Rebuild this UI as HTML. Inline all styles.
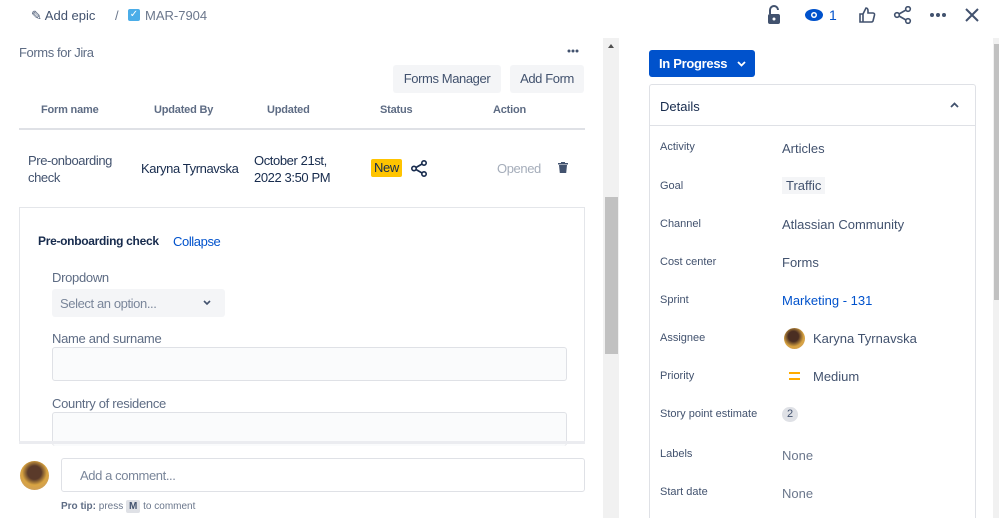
<!DOCTYPE html>
<html><head><meta charset="utf-8"><style>
*{box-sizing:border-box;margin:0;padding:0}
html{width:999px;height:518px;overflow:hidden}
body{width:999px;height:518px;overflow:hidden;background:#fff;font-family:"Liberation Sans",sans-serif;color:#172b4d;position:relative}
.a{position:absolute;white-space:nowrap}
.lbl{font-size:11px;color:#42526e}
.val{font-size:13px;color:#42526e}
.th{font-size:11px;color:#5e6c84;font-weight:bold;letter-spacing:-0.2px}
.fl{font-size:13px;color:#5e6c84;letter-spacing:-0.3px}
.c{letter-spacing:-0.4px}
.inp{position:absolute;background:#fafbfc;border:2px solid #dfe1e6;border-radius:3px}
</style></head><body>
<div class="a" style="left:31px;top:8px;font-size:13px;color:#42526e">✎ Add epic</div>
<div class="a" style="left:115px;top:8px;font-size:13px;color:#6b778c">/</div>
<div class="a" style="left:128px;top:9px;width:12px;height:12px;background:#4bade8;border-radius:2px;color:#fff;font-size:10px;line-height:12px;text-align:center">✓</div>
<div class="a" style="left:145px;top:8px;font-size:13px;color:#6b778c">MAR-7904</div>
<svg class="a" style="left:766px;top:5px" width="16" height="20" viewBox="0 0 16 20"><path d="M4 9V5a4 4 0 0 1 8 0" stroke="#42526e" stroke-width="2" fill="none"/><rect x="2" y="9" width="12" height="10" rx="2" fill="#42526e"/><circle cx="8" cy="14" r="1.5" fill="#fff"/></svg>
<svg class="a" style="left:804px;top:8px" width="20" height="14" viewBox="0 0 20 14"><ellipse cx="10" cy="7" rx="9" ry="6" fill="#0052cc"/><circle cx="10" cy="7" r="3" fill="#fff"/><circle cx="10" cy="7" r="1.5" fill="#0052cc"/></svg>
<div class="a" style="left:829px;top:7px;font-size:14px;color:#0052cc">1</div>
<svg class="a" style="left:858px;top:6px" width="18" height="18" viewBox="0 0 18 18" fill="none" stroke="#42526e" stroke-width="1.6"><path d="M2 8h3v8H2zM5 8l3-6c2 0 2 2 2 3v2h5c1 0 2 1 1.5 2l-1.5 6c-.3 1-1 1-2 1H5"/></svg>
<svg class="a" style="left:893px;top:6px" width="20" height="18" viewBox="0 0 20 18" fill="none" stroke="#42526e" stroke-width="1.6"><circle cx="15" cy="3" r="2.3"/><circle cx="4" cy="9" r="2.3"/><circle cx="15" cy="15" r="2.3"/><path d="M6 8l7-4M6 10l7 4"/></svg>
<svg class="a" style="left:929px;top:12px" width="18" height="6" viewBox="0 0 18 6" fill="#42526e"><circle cx="3" cy="3" r="2"/><circle cx="9" cy="3" r="2"/><circle cx="15" cy="3" r="2"/></svg>
<svg class="a" style="left:964px;top:7px" width="16" height="16" viewBox="0 0 16 16" stroke="#42526e" stroke-width="2"><path d="M2 2l12 12M14 2L2 14"/></svg>

<div class="a c" style="left:19px;top:45px;font-size:13px;color:#5e6c84">Forms for Jira</div>
<svg class="a" style="left:567px;top:49px" width="12" height="4" viewBox="0 0 12 4" fill="#42526e"><circle cx="2" cy="2" r="1.5"/><circle cx="6" cy="2" r="1.5"/><circle cx="10" cy="2" r="1.5"/></svg>
<div class="a c" style="left:393px;top:65px;width:108px;height:28px;background:#f4f5f7;border-radius:3px;font-size:13px;color:#42526e;text-align:center;line-height:28px">Forms Manager</div>
<div class="a c" style="left:510px;top:65px;width:74px;height:28px;background:#f4f5f7;border-radius:3px;font-size:13px;color:#42526e;text-align:center;line-height:28px">Add Form</div>
<div class="a th" style="left:41px;top:104px">Form name</div>
<div class="a th" style="left:154px;top:104px">Updated By</div>
<div class="a th" style="left:267px;top:104px">Updated</div>
<div class="a th" style="left:380px;top:104px">Status</div>
<div class="a th" style="left:493px;top:104px">Action</div>
<div class="a" style="left:19px;top:128px;width:566px;height:2px;background:#dfe1e6"></div>
<div class="a c" style="left:28px;top:152px;font-size:13px;color:#42526e;line-height:17px">Pre-onboarding<br>check</div>
<div class="a c" style="left:141px;top:161px;font-size:13px;color:#172b4d">Karyna Tyrnavska</div>
<div class="a c" style="left:254px;top:152px;font-size:13px;color:#172b4d;line-height:17px">October 21st,<br>2022 3:50 PM</div>
<div class="a c" style="left:371px;top:159px;height:18px;padding:0 3px;background:#ffc400;border-radius:2px;font-size:13px;color:#172b4d;line-height:18px">New</div>
<svg class="a" style="left:410px;top:160px" width="18" height="17" viewBox="0 0 18 17" fill="none" stroke="#172b4d" stroke-width="1.6"><circle cx="14" cy="3" r="2.2"/><circle cx="4" cy="8.5" r="2.2"/><circle cx="14" cy="14" r="2.2"/><path d="M6 7.5l6-3.5M6 9.5l6 3.5"/></svg>
<div class="a c" style="left:497px;top:161px;font-size:13px;color:#a5adba">Opened</div>
<svg class="a" style="left:558px;top:162px" width="10" height="11" viewBox="0 0 10 11"><rect x="0" y="1" width="10" height="1.5" fill="#42526e"/><rect x="3" y="0" width="4" height="1.5" fill="#42526e"/><path d="M1 3h8l-.8 8H1.8z" fill="#42526e"/></svg>

<div class="a" style="left:19px;top:207px;width:566px;height:237px;border:1px solid #e4e6ea;border-bottom:none"></div>
<div class="a" style="left:38px;top:234px;font-size:12px;font-weight:bold;color:#172b4d;letter-spacing:-0.3px">Pre-onboarding check</div>
<div class="a c" style="left:173px;top:234px;font-size:13px;color:#0052cc">Collapse</div>
<div class="a fl" style="left:52px;top:270px">Dropdown</div>
<div class="a" style="left:52px;top:289px;width:173px;height:28px;background:#f4f5f7;border-radius:3px"></div>
<div class="a c" style="left:60px;top:296px;font-size:13px;color:#7a869a">Select an option...</div>
<svg class="a" style="left:203px;top:300px" width="8" height="6" viewBox="0 0 8 6"><path d="M1 1l3 3 3-3" stroke="#42526e" stroke-width="1.6" fill="none"/></svg>
<div class="a fl" style="left:52px;top:331px">Name and surname</div>
<div class="inp" style="left:52px;top:347px;width:515px;height:34px;border-width:1px"></div>
<div class="a fl" style="left:52px;top:396px">Country of residence</div>
<div class="inp" style="left:52px;top:412px;width:515px;height:34px;border-width:1px;border-bottom:none"></div>
<div class="a" style="left:19px;top:441px;width:566px;height:3px;background:#ebecf0"></div>

<div class="a" style="left:20px;top:461px;width:29px;height:29px;border-radius:50%;background:radial-gradient(circle at 50% 40%,#5a3a2a 30%,#d9a441 55%,#c49a6c 100%)"></div>
<div class="a" style="left:61px;top:458px;width:524px;height:34px;border:1px solid #dfe1e6;border-radius:3px"></div>
<div class="a c" style="left:80px;top:468px;font-size:13px;color:#7a869a">Add a comment...</div>
<div class="a" style="left:61px;top:501px;font-size:10px;color:#6b778c"><b style="color:#5e6c84">Pro tip:</b> press <span style="background:#dfe1e6;padding:1px 3px;border-radius:2px;font-weight:bold;color:#42526e">M</span> to comment</div>

<div class="a" style="left:603px;top:38px;width:16px;height:480px;background:#f1f1f1"></div>
<div class="a" style="left:605px;top:197px;width:13px;height:157px;background:#c1c1c1"></div>
<div class="a" style="left:608px;top:44px;width:0;height:0;border:3px solid transparent;border-bottom:4px solid #505050;border-top:none"></div>

<div class="a" style="left:649px;top:50px;width:106px;height:27px;background:#0052cc;border-radius:3px;color:#fff;font-size:13px;font-weight:bold;line-height:27px;padding-left:10px;letter-spacing:-0.3px">In Progress</div>
<svg class="a" style="left:737px;top:61px" width="9" height="6" viewBox="0 0 9 6"><path d="M1 1l3.5 3.5L8 1" stroke="#fff" stroke-width="1.8" fill="none"/></svg>
<div class="a" style="left:649px;top:84px;width:327px;height:440px;border:1px solid #dfe1e6;border-radius:3px"></div>
<div class="a" style="left:650px;top:125px;width:325px;height:1px;background:#dfe1e6"></div>
<div class="a" style="left:660px;top:99px;font-size:13px;color:#172b4d">Details</div>
<svg class="a" style="left:950px;top:102px" width="9" height="6" viewBox="0 0 9 6"><path d="M1 5l3.5-3.5L8 5" stroke="#42526e" stroke-width="1.8" fill="none"/></svg>

<div class="a lbl" style="left:660px;top:141px">Activity</div><div class="a val" style="left:782px;top:141px">Articles</div>
<div class="a lbl" style="left:660px;top:180px">Goal</div><div class="a val" style="left:782px;top:177px;background:#f4f5f7;padding:1px 4px">Traffic</div>
<div class="a lbl" style="left:660px;top:218px">Channel</div><div class="a val" style="left:782px;top:217px">Atlassian Community</div>
<div class="a lbl" style="left:660px;top:256px">Cost center</div><div class="a val" style="left:782px;top:255px">Forms</div>
<div class="a lbl" style="left:660px;top:294px">Sprint</div><div class="a val" style="left:782px;top:293px;color:#0052cc">Marketing - 131</div>
<div class="a lbl" style="left:660px;top:332px">Assignee</div>
<div class="a" style="left:784px;top:328px;width:21px;height:21px;border-radius:50%;background:radial-gradient(circle at 45% 40%,#4a2e22 30%,#d9a441 60%,#c49a6c 100%)"></div>
<div class="a val" style="left:813px;top:331px">Karyna Tyrnavska</div>
<div class="a lbl" style="left:660px;top:370px">Priority</div>
<div class="a" style="left:789px;top:372px;width:11px;height:2px;background:#ffab00"></div>
<div class="a" style="left:789px;top:378px;width:11px;height:2px;background:#ffab00"></div>
<div class="a val" style="left:813px;top:369px">Medium</div>
<div class="a lbl" style="left:660px;top:408px">Story point estimate</div>
<div class="a" style="left:782px;top:407px;width:16px;height:15px;border-radius:8px;background:#dfe1e6;font-size:11px;text-align:center;line-height:15px;color:#42526e">2</div>
<div class="a lbl" style="left:660px;top:448px">Labels</div><div class="a val" style="left:782px;top:448px;color:#6b778c">None</div>
<div class="a lbl" style="left:660px;top:486px">Start date</div><div class="a val" style="left:782px;top:486px;color:#6b778c">None</div>

<div class="a" style="left:993px;top:38px;width:6px;height:480px;background:#f1f1f1"></div>
<div class="a" style="left:994px;top:44px;width:5px;height:256px;background:#c1c1c1"></div>
</body></html>
